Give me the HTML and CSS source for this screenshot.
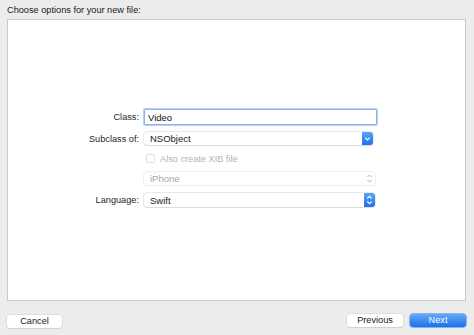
FILE: index.html
```html
<!DOCTYPE html>
<html>
<head>
<meta charset="utf-8">
<link rel="stylesheet" href="styles.css">
</head>
<body>
<div class="window">
  <div class="title">Choose options for your new file:</div>
  <div class="panel">
    <div class="form">
      <label class="lbl r-class">Class:</label>
      <div class="field r-class"><span>Video</span></div>

      <label class="lbl r-sub">Subclass of:</label>
      <div class="popup blue r-sub"><span>NSObject</span><span class="arrow"><svg width="11" height="13" viewBox="0 0 11 13"><path d="M3.2 5.6 L5.5 7.9 L7.8 5.6" fill="none" stroke="#fff" stroke-width="1.2"/></svg></span></div>

      <div class="check r-check"><span class="box"></span><span>Also create XIB file</span></div>

      <div class="popup disabled r-dev"><span>iPhone</span><span class="arrow"><svg width="11" height="13" viewBox="0 0 11 13"><path d="M3.5 5 L5.5 3 L7.5 5 M3.5 8 L5.5 10 L7.5 8" fill="none" stroke="#b0b0b0" stroke-width="1"/></svg></span></div>

      <label class="lbl r-lang">Language:</label>
      <div class="popup blue r-lang"><span>Swift</span><span class="arrow"><svg width="11" height="14" viewBox="0 0 11 14"><path d="M3.3 5.5 L5.5 3.3 L7.7 5.5 M3.3 8.5 L5.5 10.7 L7.7 8.5" fill="none" stroke="#fff" stroke-width="1.1"/></svg></span></div>
    </div>
  </div>
  <div class="buttons">
    <button class="btn cancel">Cancel</button>
    <div class="spacer"></div>
    <button class="btn prev">Previous</button>
    <button class="btn next">Next</button>
  </div>
</div>
</body>
</html>
```
FILE: styles.css
```css
html, body {
  margin: 0;
  padding: 0;
}
body {
  width: 474px;
  height: 335px;
  background: #ececec;
  font-family: "Liberation Sans", Arial, sans-serif;
  font-size: 9px;
  color: #222;
  overflow: hidden;
}
.window {
  display: flex;
  flex-direction: column;
  height: 335px;
}
.title {
  padding: 4px 0 0 7px;
  height: 15px;
  line-height: 12px;
  font-size: 9.2px;
  color: #1a1a1a;
}
.panel {
  margin-left: 7px;
  width: 457px;
  height: 280px;
  background: #fff;
  border: 1px solid #c9c9c9;
  display: flex;
  align-items: flex-start;
}
.form {
  margin-left: 44px;
  margin-top: 89px;
  display: grid;
  grid-template-columns: 87px 233px;
  grid-template-rows: 16px 7px 13px 9px 9px 9px 13px 8px 14px;
  column-gap: 5px;
  align-items: center;
}
.lbl {
  grid-column: 1;
  text-align: right;
  font-size: 9.2px;
  color: #262626;
}
.field, .popup, .check {
  grid-column: 2;
}
.r-class { grid-row: 1; }
.r-sub { grid-row: 3; }
.r-check { grid-row: 5; }
.r-dev { grid-row: 7; }
.r-lang { grid-row: 9; }
.field {
  height: 14px;
  border: 1px solid #8db4ea;
  box-shadow: 0 0 0 1px #b6d0f3;
  border-radius: 1px;
  padding-left: 3px;
  display: flex;
  align-items: center;
  font-size: 9.5px;
  color: #111;
}
.popup {
  height: 13px;
  width: 229px;
  border-radius: 3px;
  background: #fff;
  box-shadow: 0 0 0 0.5px #d4d4d4, 0 1px 1px rgba(0,0,0,0.12);
  display: flex;
  align-items: center;
  justify-content: space-between;
  padding-left: 6px;
  box-sizing: border-box;
  font-size: 9.5px;
  color: #1a1a1a;
}
.popup .arrow {
  width: 11px;
  height: 100%;
  display: flex;
  align-items: center;
  justify-content: center;
  border-radius: 0 3px 3px 0;
}
.popup.blue .arrow {
  background: linear-gradient(#5aa2f7, #1d73ec);
}
.popup.disabled {
  color: #a5a5a5;
  box-shadow: 0 0 0 0.5px #e2e2e2, 0 1px 1px rgba(0,0,0,0.05);
  width: 231px;
}
.popup.r-lang { width: 231px; height: 14px; }
.check {
  display: flex;
  align-items: center;
  height: 9px;
  padding-left: 2px;
  color: #b4b4b4;
  font-size: 9.2px;
}
.check .box {
  width: 9px;
  height: 9px;
  border: 1px solid #e0e0e0;
  border-radius: 2px;
  margin-right: 5px;
  box-sizing: border-box;
}
.buttons {
  display: flex;
  align-items: center;
  padding: 12px 8px 0 7px;
  gap: 7px;
}
.spacer { flex: 1; }
.btn {
  font-family: "Liberation Sans", Arial, sans-serif;
  font-size: 9.2px;
  height: 13px;
  line-height: 13px;
  padding: 0;
  border: none;
  border-radius: 3px;
  background: #fff;
  color: #1a1a1a;
  box-shadow: 0 0 0 0.5px #d0d0d0, 0 1px 1px rgba(0,0,0,0.12);
  width: 56px;
}
.cancel { width: 55px; margin-top: 2px; }
.next {
  background: linear-gradient(#63a8f8, #1b71eb);
  color: #fff;
  box-shadow: 0 0 0 0.5px #2a7ae6;
}
```
